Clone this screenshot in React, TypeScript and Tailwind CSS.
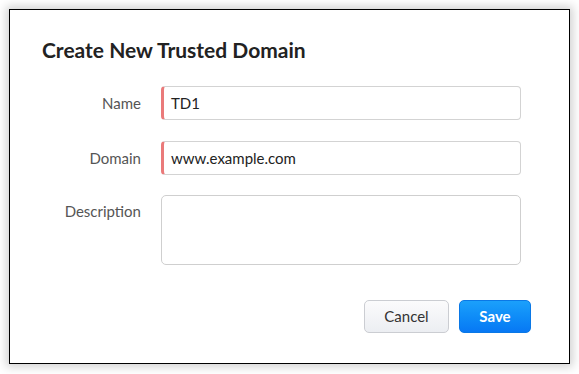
import React from "react";

const font = { fontFamily: "Lato, 'Open Sans', sans-serif" };

function Row({ label, value, tall }: { label: string; value?: string; tall?: boolean }) {
  return (
    <div className={`flex ${tall ? "items-start" : "items-center"}`}>
      <div
        className={`w-[99px] text-right text-[15px] text-[#555] ${tall ? "pt-[5px]" : ""}`}
      >
        {label}
      </div>
      <div className="ml-[20px]">
        {tall ? (
          <div className="w-[360px] h-[70px] rounded-[5px] border border-[#cfcfcf] bg-white" />
        ) : (
          <div className="w-[360px] h-[34px] rounded-[4px] border border-[#d3d3d3] border-l-[3px] border-l-[#ea7a7a] bg-white flex items-center pl-[7px] text-[15px] text-[#222]">
            {value}
          </div>
        )}
      </div>
    </div>
  );
}

export default function App() {
  return (
    <div className="w-[579px] h-[374px] bg-white p-[9px]" style={font}>
      <div className="w-[561px] h-[355px] border border-black bg-white shadow-[0_0_9px_3px_rgba(0,0,0,0.18)] flex flex-col pl-[32px] pr-[38px]">
        <h1 className="mt-[26px] text-[21px] font-bold text-[#222] leading-[27px]">
          Create New Trusted Domain
        </h1>
        <div className="mt-[23px] flex flex-col gap-[21px]">
          <Row label="Name" value="TD1" />
          <Row label="Domain" value="www.example.com" />
          <div className="-mt-[1px]">
            <Row label="Description" tall />
          </div>
        </div>
        <div className="mt-[35px] flex justify-end gap-[10px]">
          <button className="w-[85px] h-[33px] rounded-[5px] border border-[#cbcdd2] bg-gradient-to-b from-[#fbfbfc] to-[#eceef2] text-[15px] text-[#333]">
            Cancel
          </button>
          <button className="w-[72px] h-[33px] rounded-[5px] border border-[#0a78e6] bg-gradient-to-b from-[#1ba0fb] to-[#0878f4] text-[15px] font-bold text-white">
            Save
          </button>
        </div>
      </div>
    </div>
  );
}
